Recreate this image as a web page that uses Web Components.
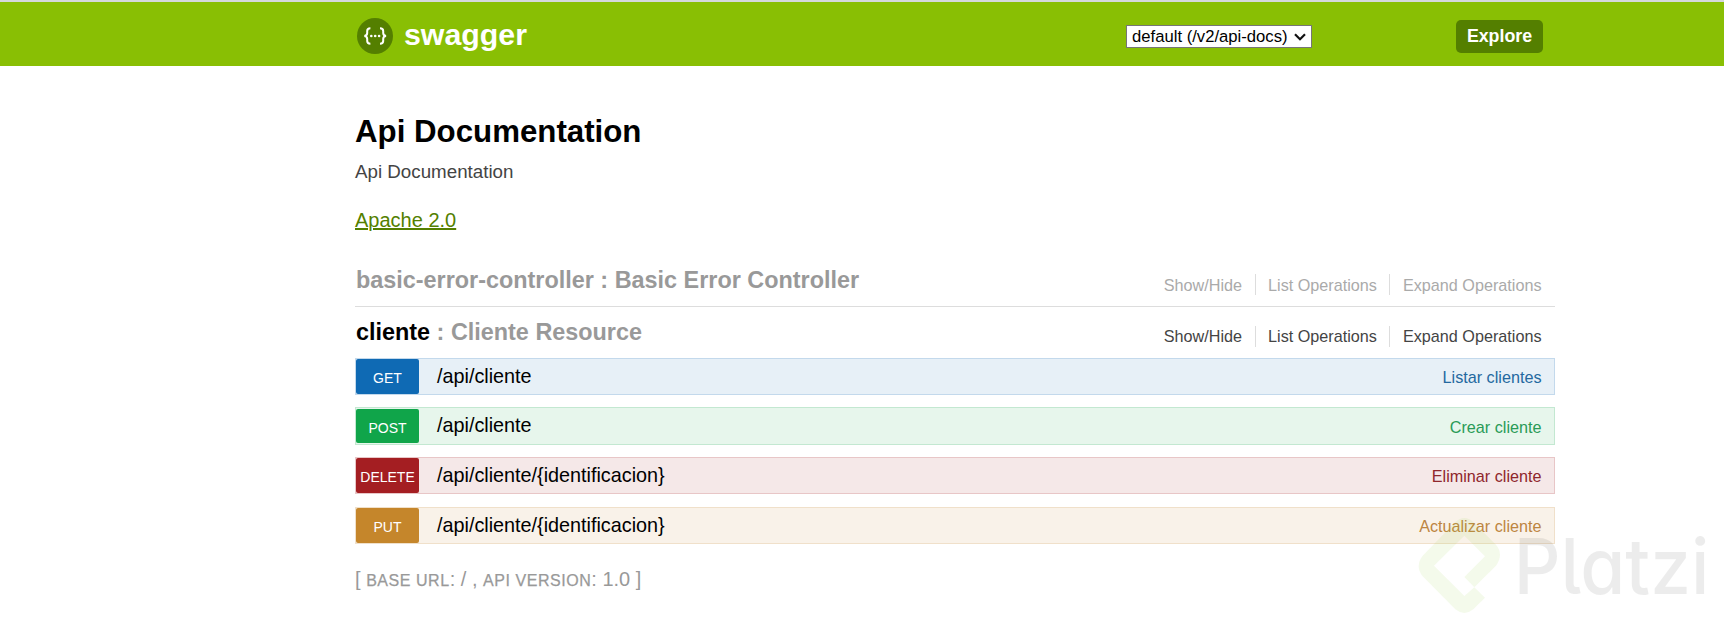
<!DOCTYPE html>
<html lang="es">
<head>
<meta charset="utf-8">
<title>Swagger UI</title>
<style>
  body {
    margin: 0;
    background: #fff;
    font-family: "Liberation Sans", Arial, sans-serif;
    height: 620px;
    overflow: hidden;
    position: relative;
  }
</style>
</head>
<body>
<swagger-header>default (/v2/api-docs)</swagger-header>
<swagger-container>
  <api-info title="Api Documentation" license="Apache 2.0">Api Documentation</api-info>
  <api-resource name="basic-error-controller" label="Basic Error Controller"></api-resource>
  <api-resource name="cliente" label="Cliente Resource" active>
    <api-operation method="get" path="/api/cliente">Listar clientes</api-operation>
    <api-operation method="post" path="/api/cliente">Crear cliente</api-operation>
    <api-operation method="delete" path="/api/cliente/{identificacion}">Eliminar cliente</api-operation>
    <api-operation method="put" path="/api/cliente/{identificacion}">Actualizar cliente</api-operation>
  </api-resource>
  <api-footer>[ <b>BASE URL</b>: / , <b>API VERSION</b>: 1.0 ]</api-footer>
</swagger-container>
<platzi-mark></platzi-mark>

<script>
class SwaggerHeader extends HTMLElement {
  constructor () {
    super()
    this.attachShadow({ mode: 'open' })
  }

  connectedCallback () {
    this.shadowRoot.innerHTML = /* html */`
    <style>
      :host {
        display: block;
        background: #89bf04;
        border-top: 2px solid #d5d8dc;
        height: 64px;
      }
      .bar {
        align-items: center;
        box-sizing: border-box;
        display: flex;
        height: 64px;
        margin-left: 355px;
        padding: 5px 12px 0 2px;
        width: 1200px;
      }
      .logo {
        display: block;
        height: 36px;
        margin-top: -2px;
        width: 36px;
      }
      .name {
        color: #fff;
        font-size: 30.3px;
        font-weight: bold;
        line-height: 34px;
        margin: -3px auto 0 11px;
      }
      .select {
        align-items: center;
        background: #fff;
        border: 1px solid #767676;
        box-sizing: border-box;
        color: #000;
        display: flex;
        font-size: 16.67px;
        height: 23px;
        justify-content: space-between;
        margin-right: 144px;
        padding: 0 5px;
        white-space: nowrap;
        width: 186px;
      }
      .explore {
        background: #547f00;
        border-radius: 5px;
        color: #fff;
        font-size: 17.8px;
        font-weight: bold;
        height: 33px;
        line-height: 32px;
        text-align: center;
        width: 87px;
      }
    </style>
    <div class="bar">
      <svg class="logo" viewBox="0 0 36 36">
        <circle cx="18" cy="18" r="18" fill="#547f00"/>
        <g fill="none" stroke="#fff" stroke-width="2">
          <path d="M13.4 10.3c-2.6 0-3.2.9-3.2 2.7v2.100c0 1.800-.8 2.600-2.800 2.900 2 .3 2.800 1.100 2.800 2.900v2.100c0 1.800.6 2.700 3.200 2.700"/>
          <path d="M23 10.300c2.600 0 3.200.9 3.200 2.700v2.100c0 1.800.8 2.600 2.800 2.900-2 .3-2.800 1.100-2.800 2.900v2.100c0 1.800-.6 2.700-3.200 2.700"/>
        </g>
        <g fill="#fff">
          <circle cx="14.300" cy="18" r="1.300"/>
          <circle cx="18.200" cy="18" r="1.300"/>
          <circle cx="22.100" cy="18" r="1.300"/>
        </g>
      </svg>
      <span class="name">swagger</span>
      <div class="select">
        <slot></slot>
        <svg width="12" height="8" viewBox="0 0 12 8">
          <path d="M1 1.200l5 5 5-5" fill="none" stroke="#111" stroke-width="2.200"/>
        </svg>
      </div>
      <div class="explore">Explore</div>
    </div>`
  }
}

class SwaggerContainer extends HTMLElement {
  constructor () {
    super()
    this.attachShadow({ mode: 'open' })
    this.shadowRoot.innerHTML = /* html */`
    <style>
      :host {
        display: block;
        margin-left: 355px;
        width: 1200px;
      }
    </style>
    <slot></slot>`
  }
}

class ApiInfo extends HTMLElement {
  constructor () {
    super()
    this.attachShadow({ mode: 'open' })
  }

  connectedCallback () {
    this.shadowRoot.innerHTML = /* html */`
    <style>
      :host {
        display: block;
        padding-top: 48px;
      }
      .title {
        color: #000;
        font-size: 31.25px;
        font-weight: bold;
        line-height: 36px;
      }
      .description {
        color: #444;
        font-size: 18.75px;
        line-height: 22px;
        margin-top: 11px;
      }
      a {
        color: #547f00;
        display: block;
        font-size: 20px;
        line-height: 24px;
        margin-top: 25px;
        text-decoration: underline;
      }
    </style>
    <div class="title">${this.getAttribute('title')}</div>
    <div class="description"><slot></slot></div>
    <a>${this.getAttribute('license')}</a>`
  }
}

class ApiResource extends HTMLElement {
  constructor () {
    super()
    this.attachShadow({ mode: 'open' })
  }

  connectedCallback () {
    this.shadowRoot.innerHTML = /* html */`
    <style>
      :host {
        --name: #999;
        --option: #aaa;
        display: block;
      }
      :host([active]) {
        --name: #000;
        --option: #444;
      }
      .heading {
        box-sizing: border-box;
        display: flex;
        height: 75px;
        justify-content: space-between;
        padding: 34px 13.5px 0 1px;
        border-bottom: 1px solid #ddd;
      }
      :host([active]) .heading {
        border: 0;
        height: 51px;
        padding-top: 11px;
      }
      .name {
        color: #999;
        font-size: 23.4px;
        font-weight: bold;
        line-height: 28px;
      }
      .name span {
        color: var(--name);
      }
      .options {
        align-items: flex-start;
        color: var(--option);
        display: flex;
        font-size: 16.2px;
        line-height: 20px;
        margin-top: 8px;
      }
      .options span {
        padding-top: 1px;
      }
      :host([active]) .options span {
        line-height: 21px;
        padding-top: 0;
      }
      .options span + span {
        border-left: 1px solid #ddd;
        margin-left: 12.5px;
        padding-left: 12.5px;
      }
    </style>
    <div class="heading">
      <div class="name"><span>${this.getAttribute('name')}</span> : ${this.getAttribute('label')}</div>
      <div class="options">
        <span>Show/Hide</span>
        <span>List Operations</span>
        <span>Expand Operations</span>
      </div>
    </div>
    <slot></slot>`
  }
}

const methodColors = {
  get: ['#0f6ab4', '#e7f0f7', '#c3d9ec', '#24699f'],
  post: ['#10a54a', '#e7f6ec', '#c3e8d1', '#2a9b57'],
  delete: ['#a41e22', '#f5e8e8', '#e8c6c7', '#8f272c'],
  put: ['#c5862b', '#f9f2e9', '#f0e0ca', '#bd8541']
}

class ApiOperation extends HTMLElement {
  constructor () {
    super()
    this.attachShadow({ mode: 'open' })
  }

  connectedCallback () {
    const method = this.getAttribute('method')
    const [badge, background, border, text] = methodColors[method]
    this.shadowRoot.innerHTML = /* html */`
    <style>
      :host {
        align-items: flex-start;
        background: ${background};
        border: 1px solid ${border};
        box-sizing: border-box;
        display: flex;
        height: 37px;
        margin-bottom: 12px;
      }
      :host([method="post"]) {
        height: 38px;
        padding-top: 1px;
      }
      :host([method="delete"]) {
        margin-bottom: 13px;
      }
      .method {
        background: ${badge};
        border-radius: 2px;
        color: #fff;
        font-size: 14px;
        height: 35px;
        line-height: 38px;
        text-align: center;
        width: 63px;
      }
      :host([method="post"]) .method {
        height: 34px;
      }
      .path {
        color: #000;
        flex: 1;
        font-size: 19.8px;
        line-height: 34px;
        padding-left: 18px;
      }
      :host([method="post"]) .path {
        line-height: 32px;
      }
      .summary {
        color: ${text};
        font-size: 16.2px;
        line-height: 37px;
        padding-right: 12.5px;
      }
    </style>
    <span class="method">${method.toUpperCase()}</span>
    <span class="path">${this.getAttribute('path')}</span>
    <span class="summary"><slot></slot></span>`
  }
}

class ApiFooter extends HTMLElement {
  constructor () {
    super()
    this.attachShadow({ mode: 'open' })
    this.shadowRoot.innerHTML = /* html */`
    <style>
      :host {
        color: #999;
        display: block;
        font-size: 20px;
        line-height: 24px;
        padding-top: 11px;
      }
      ::slotted(b) {
        -webkit-text-stroke: .25px #999;
        font-size: 16px;
        font-weight: normal;
        letter-spacing: .55px;
      }
    </style>
    <slot></slot>`
  }
}

class PlatziMark extends HTMLElement {
  constructor () {
    super()
    this.attachShadow({ mode: 'open' })
    this.shadowRoot.innerHTML = /* html */`
    <style>
      :host {
        left: 1410px;
        position: absolute;
        top: 500px;
      }
      svg {
        display: block;
      }
      text {
        font-family: Inter, sans-serif;
        font-feature-settings: "cv11", "cv05";
        font-size: 77px;
        font-weight: 500;
      }
    </style>
    <svg width="314" height="120" viewBox="0 0 314 120">
      <path d="M193 262L163 231 225 169 163 107 72 197 163 288 193 262 225 293 190 328Q163 350 136 328L38 229Q14 198 38 167L136 66Q163 42 190 66L258 134Q282 163 258 197Z"
        transform="scale(.3333)" fill="#98ca3f" fill-opacity=".1"/>
      <text x="103.8" y="94" fill="#000" fill-opacity=".075" textLength="195.5" lengthAdjust="spacingAndGlyphs">Platzi</text>
    </svg>`
  }
}

customElements.define('swagger-header', SwaggerHeader)
customElements.define('swagger-container', SwaggerContainer)
customElements.define('api-info', ApiInfo)
customElements.define('api-resource', ApiResource)
customElements.define('api-operation', ApiOperation)
customElements.define('api-footer', ApiFooter)
customElements.define('platzi-mark', PlatziMark)
</script>
</body>
</html>
